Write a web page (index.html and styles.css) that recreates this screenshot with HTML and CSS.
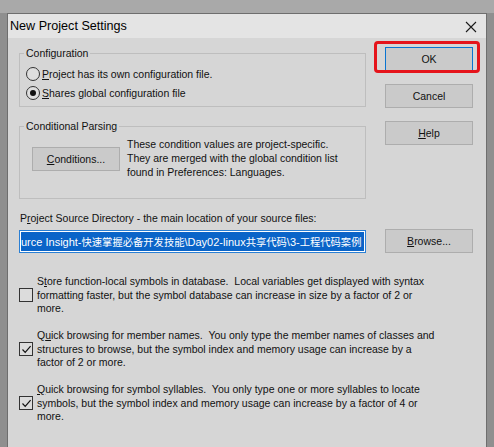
FILE: index.html
```html
<!DOCTYPE html>
<html>
<head>
<meta charset="utf-8">
<link rel="stylesheet" href="styles.css">
</head>
<body>
<div class="page">
  <div class="dialog">
    <div class="titlebar">
      <span class="title">New Project Settings</span>
      <svg class="close" width="12" height="12" viewBox="0 0 12 12"><path d="M1 1L11 11M11 1L1 11" stroke="#1a1a1a" stroke-width="1.1" fill="none"/></svg>
    </div>
    <div class="content">
      <div class="top">
        <div class="leftcol">
          <div class="group g1">
            <div class="legend">Configuration</div>
            <div class="radio-row"><span class="radio"></span><span><u>P</u>roject has its own configuration file.</span></div>
            <div class="radio-row"><span class="radio on"></span><span><u>S</u>hares global configuration file</span></div>
          </div>
          <div class="group g2">
            <div class="legend">Conditional Parsing</div>
            <div class="cond-row">
              <div class="btn cond-btn"><u>C</u>onditions...</div>
              <div class="cond-text">These condition values are project-specific.<br>They are merged with the global condition list<br>found in Preferences: Languages.</div>
            </div>
          </div>
        </div>
        <div class="buttons">
          <div class="btn default">OK</div>
          <div class="btn">Cancel</div>
          <div class="btn"><u>H</u>elp</div>
        </div>
      </div>
      <div class="src-label">P<u>r</u>oject Source Directory - the main location of your source files:</div>
      <div class="src-row">
        <div class="input"><span class="sel">urce Insight-<span class="cjk">快速掌握必备开发技能</span>\Day02-linux<span class="cjk">共享代码</span>\3-<span class="cjk">工程代码案例</span></span></div>
        <div class="btn browse"><u>B</u>rowse...</div>
      </div>
      <div class="checks">
        <div class="check-row"><span class="cb"></span><div class="ctext">S<u>t</u>ore function-local symbols in database.&nbsp; Local variables get displayed with syntax<br>formatting faster, but the symbol database can increase in size by a factor of 2 or<br>more.</div></div>
        <div class="check-row"><span class="cb"><svg width="11" height="11" viewBox="0 0 11 11"><path d="M1.5 5.5L4.2 8.3L9.6 2.2" stroke="#111" stroke-width="1.2" fill="none"/></svg></span><div class="ctext">Q<u>u</u>ick browsing for member names.&nbsp; You only type the member names of classes and<br>structures to browse, but the symbol index and memory usage can increase by a<br>factor of 2 or more.</div></div>
        <div class="check-row"><span class="cb"><svg width="11" height="11" viewBox="0 0 11 11"><path d="M1.5 5.5L4.2 8.3L9.6 2.2" stroke="#111" stroke-width="1.2" fill="none"/></svg></span><div class="ctext"><u>Q</u>uick browsing for symbol syllables.&nbsp; You only type one or more syllables to locate<br>symbols, but the symbol index and memory usage can increase by a factor of 4 or<br>more.</div></div>
      </div>
    </div>
  </div>
  <div class="highlight"></div>
</div>
</body>
</html>
```
FILE: styles.css
```css
html, body {
  margin: 0;
  padding: 0;
}
body {
  width: 494px;
  height: 447px;
  overflow: hidden;
  background: #8e8e8e;
  font-family: "Liberation Sans", Arial, sans-serif;
  font-size: 10.5px;
  color: #111;
}
.page {
  position: relative;
  width: 494px;
  height: 447px;
  background: linear-gradient(#a9a9a9 0, #a9a9a9 13px, #8f8f8f 13px);
  padding-top: 13px;
  box-sizing: border-box;
}
.dialog {
  margin-left: 7px;
  width: 480px;
  height: 434px;
  box-sizing: border-box;
  border: 1px solid #6e6e6e;
  border-bottom: none;
  background: #d6d6d6;
}
.titlebar {
  height: 24px;
  background: #e4e4e4;
  display: flex;
  align-items: center;
  justify-content: space-between;
  padding: 0 9px 0 2px;
}
.title {
  font-family: "Liberation Sans", Arial, sans-serif;
  font-size: 12.6px;
  color: #000;
}
.close {
  margin-top: 1px;
}
.content {
  padding: 0 0 0 11px;
}
.top {
  display: flex;
  align-items: flex-start;
}
.leftcol {
  width: 347px;
  padding-top: 15px;
}
.group {
  border: 1px solid #bebebe;
  box-sizing: border-box;
  padding: 0 6px;
}
.g1 {
  height: 54px;
}
.g2 {
  margin-top: 19px;
  height: 73px;
}
.legend {
  display: block;
  width: fit-content;
  margin-top: -8px;
  margin-left: -2px;
  padding: 0 2px;
  background: #d6d6d6;
  line-height: 14px;
}
.radio-row {
  display: flex;
  align-items: center;
  gap: 2px;
  height: 19px;
}
.g1 .legend + .radio-row {
  margin-top: 4px;
}
.radio {
  width: 12px;
  height: 12px;
  border: 1px solid #333;
  border-radius: 50%;
  background: #dedede;
  position: relative;
  flex: none;
}
.radio.on::after {
  content: "";
  position: absolute;
  left: 3px;
  top: 3px;
  width: 6px;
  height: 6px;
  border-radius: 50%;
  background: #111;
}
.cond-row {
  display: flex;
  align-items: flex-start;
  gap: 7px;
  margin-top: 4px;
  padding-left: 6px;
}
.btn {
  box-sizing: border-box;
  width: 88px;
  height: 24px;
  border: 1px solid #adadad;
  background: #cacaca;
  display: flex;
  align-items: center;
  justify-content: center;
  flex: none;
}
.cond-btn {
  margin-top: 10px;
}
.cond-text {
  line-height: 14px;
}
.buttons {
  margin-left: 19px;
  padding-top: 9px;
  display: flex;
  flex-direction: column;
  gap: 13px;
}
.btn.default {
  border-color: #0a74d0;
}
.src-label {
  margin-top: 12px;
  line-height: 14px;
  padding-left: 1px;
}
.src-row {
  display: flex;
  align-items: center;
  gap: 19px;
  margin-top: 4px;
}
.input {
  box-sizing: border-box;
  width: 347px;
  height: 23px;
  border: 1px solid #2a7fd4;
  background: #fff;
  display: flex;
  align-items: center;
  overflow: hidden;
  white-space: nowrap;
  padding: 1px;
}
.sel {
  flex: 1;
  background: #0a64c8;
  color: #fff;
  height: 19px;
  line-height: 19px;
  font-size: 11px;
  overflow: hidden;
}
.cjk {
  font-family: "Noto Sans CJK SC", sans-serif;
  font-size: 10.3px;
}
.checks {
  margin-top: 22px;
}
.check-row {
  display: flex;
  align-items: center;
  gap: 4px;
  margin-bottom: 13.5px;
}
.cb {
  box-sizing: border-box;
  width: 14px;
  height: 14px;
  border: 1px solid #333;
  background: #dcdcdc;
  display: flex;
  align-items: center;
  justify-content: center;
  flex: none;
}
.ctext {
  line-height: 13.5px;
}
.highlight {
  position: absolute;
  left: 374px;
  top: 41px;
  width: 106px;
  height: 32px;
  box-sizing: border-box;
  border: 3px solid #e5141b;
  border-radius: 4px;
}
```
